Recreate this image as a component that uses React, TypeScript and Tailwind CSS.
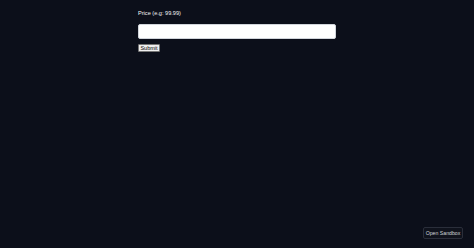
import React, { useState } from "react";

const App: React.FC = () => {
    const [price, setPrice] = useState("");

    return (
        <div className="relative min-h-screen w-full bg-[#0c0f1a] font-['Liberation_Sans',Arial,sans-serif]">
            {/* Form */}
            <form
                className="mx-auto flex w-[198px] flex-col pt-[10px]"
                onSubmit={(e) => e.preventDefault()}
            >
                <label className="text-[5.6px] leading-[7px] text-[#f3f4f6]">
                    Price (e.g: 99.99)
                </label>
                <input
                    type="text"
                    value={price}
                    onChange={(e) => setPrice(e.target.value)}
                    className="mt-[7px] h-[15px] w-full rounded-[2px] border border-[#d1d5db] bg-white px-1 text-[6px] text-black outline-none"
                />
                <button
                    type="submit"
                    className="mt-[5px] h-[8px] w-[22px] rounded-[1px] border border-[#767676] bg-[#efefef] text-[5.5px] leading-[6px] text-black"
                >
                    Submit
                </button>
            </form>

            {/* Open Sandbox */}
            <button className="absolute right-[11px] bottom-[9px] h-[12px] w-[40px] rounded-[2px] border border-[#2a2e3a] bg-[#0f121c] text-[5.2px] leading-[10px] text-[#d1d5db]">
                Open Sandbox
            </button>
        </div>
    );
};

export default App;
